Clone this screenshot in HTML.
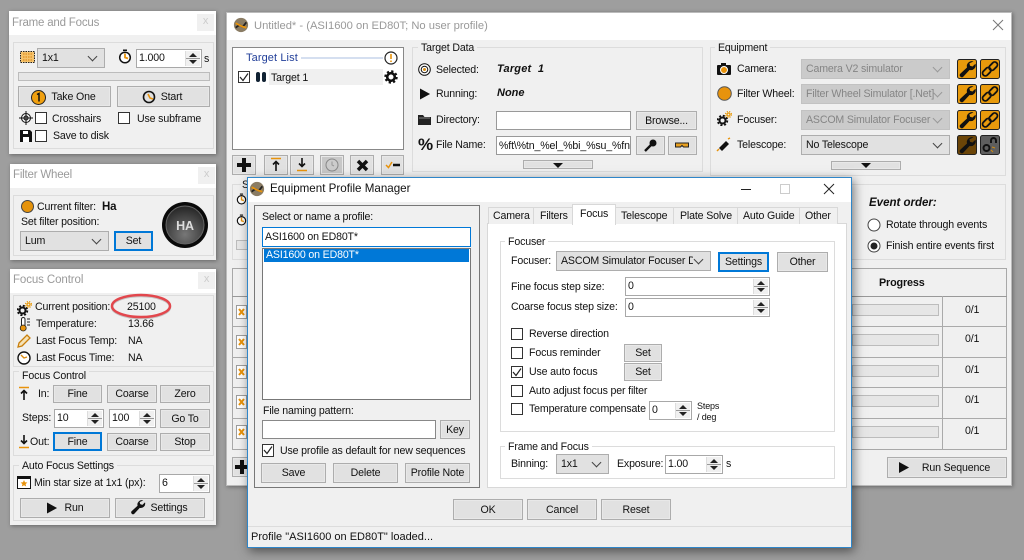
<!DOCTYPE html>
<html><head><meta charset="utf-8"><style>
html,body{margin:0;padding:0}
body{width:1024px;height:560px;overflow:hidden;position:relative;background:#9e9e9e;font:10.6px "Liberation Sans",sans-serif;letter-spacing:-.15px;color:#111}
.a,.t,.b,.c,.s,.k,.g,.x,.r{position:absolute;box-sizing:border-box}
.t{line-height:14px;margin-top:-6px;white-space:nowrap}
.g{border:1px solid #dcdcdc}
.b{background:#e1e1e1;border:1px solid #adadad;box-shadow:inset 0 0 0 1px #e8e8e8;display:flex;align-items:center;justify-content:center;white-space:nowrap}
.f{border:2px solid #0078d7;box-shadow:none}
.c{background:#e1e1e1;border:1px solid #adadad;line-height:19px;padding-left:4px;white-space:nowrap;overflow:hidden}
.c:after{content:"";position:absolute;right:8px;top:50%;width:6px;height:6px;margin-top:-5px;border-right:1px solid #444;border-bottom:1px solid #444;transform:rotate(45deg)}
.d{background:#cbcbcb;color:#858585;border-color:#c2c2c2}
.d:after{border-color:#999}
.s{background:#fff;border:1px solid #a8a8a8;line-height:17px;padding-left:2px;white-space:nowrap}
.s:after{content:"";position:absolute;right:1px;top:1px;bottom:1px;width:14px;background:linear-gradient(#f0f0f0 47%,#999 47%,#999 53%,#f0f0f0 53%);border-left:1px solid #ddd}
.s b{position:absolute;z-index:1;right:4px;width:0;height:0;border-left:4px solid transparent;border-right:4px solid transparent}
.s b.u{top:3px;border-bottom:4px solid #222}
.s b.n{bottom:3px;border-top:4px solid #222}
.k{width:12px;height:12px;background:#fff;border:1px solid #333}
.x{background:#f0f0f0;color:#ccc;width:17px;height:17px;text-align:center;line-height:15px;font-size:11px}
.p{background:#e6e6e6;border:1px solid #bcbcbc}
svg{position:absolute;overflow:visible}
.w{position:absolute;box-sizing:border-box;background:#f0f0f0;box-shadow:1px 1px 4px rgba(0,0,0,.35)}
.h{position:absolute;background:#fff;left:0;top:0;right:0}
.l{background:#f0f0f0;padding:0 3px}
</style></head><body>
<svg width="0" height="0" style="position:absolute"><defs>
<symbol id="wr" viewBox="0 0 20 20"><rect x=".5" y=".5" width="19" height="19" rx="2" fill="#e89a0c" stroke="#222"/><path d="M16.500 2.500a5 5 0 0 0-6.500 6L3 15a2.200 2.200 0 0 0 3 3l6.500-7a5 5 0 0 0 6-6.300l-3 2.800-2.500-.8-.6-2.400z" fill="#111"/></symbol>
<symbol id="wrd" viewBox="0 0 20 20"><rect x=".5" y=".5" width="19" height="19" rx="2" fill="#6b4508" stroke="#222"/><path d="M16.500 2.500a5 5 0 0 0-6.500 6L3 15a2.200 2.200 0 0 0 3 3l6.500-7a5 5 0 0 0 6-6.300l-3 2.800-2.500-.8-.6-2.400z" fill="#111"/></symbol>
<symbol id="ch" viewBox="0 0 20 20"><rect x=".5" y=".5" width="19" height="19" rx="2" fill="#e89a0c" stroke="#222"/><g fill="none" stroke="#111" stroke-width="1.800"><rect x="2" y="10" width="9.500" height="5.500" rx="2.700" transform="rotate(-45 6.700 12.700)"/><rect x="8.500" y="4.500" width="9.500" height="5.500" rx="2.700" transform="rotate(-45 13.200 7.200)"/></g></symbol>
<symbol id="gear" viewBox="0 0 14 14"><circle cx="7" cy="7" r="3.800" fill="none" stroke="#111" stroke-width="2.600"/><circle cx="7" cy="7" r="5.600" fill="none" stroke="#111" stroke-width="2.200" stroke-dasharray="2.200 2.200"/></symbol>
<symbol id="fg" viewBox="0 0 15 15"><circle cx="5.500" cy="9.500" r="3" fill="none" stroke="#111" stroke-width="2"/><circle cx="5.500" cy="9.500" r="4.800" fill="none" stroke="#111" stroke-width="1.800" stroke-dasharray="2 1.800"/><circle cx="11.500" cy="3.500" r="1.500" fill="none" stroke="#e89a0c" stroke-width="1.300"/><circle cx="11.500" cy="3.500" r="3" fill="none" stroke="#e89a0c" stroke-width="1.200" stroke-dasharray="1.200 1.200"/></symbol>
<symbol id="lg" viewBox="0 0 18 18"><circle cx="9" cy="9" r="8" fill="#8a7c64"/><path d="M3 12l4-3 4 2 4-5" fill="none" stroke="#222" stroke-width="2"/><path d="M3 7l4 2 4 2 4 1" fill="none" stroke="#e8930c" stroke-width="2"/></symbol>
<symbol id="ck" viewBox="0 0 12 12"><path d="M2 6l3 3.500L10 2.500" fill="none" stroke="#222" stroke-width="1.200"/></symbol>
<symbol id="clk" viewBox="0 0 14 14"><rect x="5" y="0" width="4" height="1.500" fill="#111"/><circle cx="7" cy="8" r="5.300" fill="#fff" stroke="#111" stroke-width="1.500"/><path d="M7 4v4l3 1" stroke="#e8930c" stroke-width="1.800" fill="none"/></symbol>
<symbol id="play" viewBox="0 0 12 12"><path d="M0 0L11 6L0 12z" fill="#111"/></symbol>
<symbol id="xo" viewBox="0 0 11 14"><rect x=".5" y=".5" width="10" height="13" fill="#fff" stroke="#444" stroke-dasharray="1 1"/><path d="M3 4l5 6M8 4l-5 6" stroke="#e8930c" stroke-width="2"/></symbol>
</defs></svg>

<!-- Frame and Focus -->
<div class="w" style="left:9px;top:11px;width:207px;height:143px"><div class="h" style="height:24px"></div></div>
<div class="t" style="left:12px;top:22px;color:#9a9a9a;font-size:11.500px;letter-spacing:-.2px">Frame and Focus</div>
<div class="x" style="left:197px;top:14px">x</div>
<div class="g" style="left:13px;top:42px;width:201px;height:107px"></div>
<svg style="left:20px;top:51px" width="15" height="12"><rect x=".5" y=".5" width="14" height="11" fill="#f5c26b" stroke="#222" stroke-dasharray="1.500 1"/><path d="M3 3h9M3 6h9M3 9h9" stroke="#d9820c" stroke-dasharray="1.500 1"/></svg>
<div class="c" style="left:37px;top:48px;width:68px;height:20px">1x1</div>
<svg style="left:118px;top:49px" width="14" height="15"><use href="#clk"/></svg>
<div class="s" style="left:136px;top:49px;width:66px;height:19px">1.000<b class="u"></b><b class="n"></b></div>
<div class="t" style="left:204px;top:58px">s</div>
<div class="p a" style="left:18px;top:72px;width:192px;height:9px"></div>
<div class="b" style="left:18px;top:86px;width:93px;height:21px;padding-left:18px">Take One</div>
<svg style="left:31px;top:90px" width="15" height="15"><circle cx="7.500" cy="7.500" r="7" fill="#f0a010" stroke="#222"/><path d="M6 4.500l2-1v8" stroke="#111" stroke-width="1.500" fill="none"/></svg>
<div class="b" style="left:117px;top:86px;width:93px;height:21px;padding-left:16px">Start</div>
<svg style="left:142px;top:90px" width="14" height="14"><circle cx="7" cy="7" r="5.500" fill="none" stroke="#111" stroke-width="1.600"/><path d="M6 4l2 4 3 1" stroke="#e8930c" stroke-width="1.600" fill="none"/></svg>
<svg style="left:19px;top:111px" width="14" height="14"><circle cx="7" cy="7" r="4.500" fill="none" stroke="#111"/><circle cx="7" cy="7" r="2" fill="none" stroke="#111"/><path d="M7 0v14M0 7h14" stroke="#111"/></svg>
<div class="k" style="left:35px;top:112px"></div><div class="t" style="left:52px;top:118px">Crosshairs</div>
<div class="k" style="left:118px;top:112px"></div><div class="t" style="left:137px;top:118px">Use subframe</div>
<svg style="left:20px;top:130px" width="12" height="12"><path d="M0 0h10l2 2v10H0z" fill="#111"/><rect x="3" y="1" width="5" height="3" fill="#fff"/><rect x="3" y="7" width="6" height="5" fill="#fff"/></svg>
<div class="k" style="left:35px;top:130px"></div><div class="t" style="left:53px;top:135px">Save to disk</div>

<!-- Filter Wheel -->
<div class="w" style="left:10px;top:164px;width:206px;height:96px"><div class="h" style="height:24px"></div></div>
<div class="t" style="left:13px;top:174px;color:#9a9a9a;font-size:11.500px;letter-spacing:-.2px">Filter Wheel</div>
<div class="x" style="left:198px;top:167px">x</div>
<div class="g" style="left:13px;top:195px;width:201px;height:61px"></div>
<svg style="left:21px;top:200px" width="13" height="13"><circle cx="6.500" cy="6.500" r="6" fill="#e5930c" stroke="#444"/></svg>
<div class="t" style="left:37px;top:206px">Current filter:</div>
<div class="t" style="left:102px;top:206px;font-weight:bold;font-size:11.500px">Ha</div>
<div class="t" style="left:21px;top:221px">Set filter position:</div>
<div class="c" style="left:20px;top:231px;width:89px;height:20px">Lum</div>
<div class="b f" style="left:114px;top:231px;width:39px;height:20px">Set</div>
<svg style="left:162px;top:202px" width="46" height="46"><defs><radialGradient id="kn" cx=".5" cy=".75" r=".7"><stop offset="0" stop-color="#777"/><stop offset="1" stop-color="#2a2a2a"/></radialGradient></defs><circle cx="23" cy="23" r="23" fill="#0a0a0a"/><circle cx="23" cy="23" r="19" fill="url(#kn)" stroke="#666"/><text x="23" y="28" text-anchor="middle" fill="#ddd" font-family="Liberation Sans" font-weight="bold" font-size="12.500">HA</text></svg>

<!-- Focus Control -->
<div class="w" style="left:10px;top:269px;width:206px;height:256px"><div class="h" style="height:24px"></div></div>
<div class="t" style="left:13px;top:279px;color:#9a9a9a;font-size:11.500px;letter-spacing:-.1px">Focus Control</div>
<div class="x" style="left:198px;top:272px">x</div>
<div class="g" style="left:13px;top:295px;width:201px;height:72px"></div>
<svg style="left:17px;top:301px" width="15" height="15"><use href="#fg"/></svg>
<div class="t" style="left:35px;top:306px">Current position:</div>
<div class="t" style="left:127px;top:306px">25100</div>
<div class="t" style="left:36px;top:323px">Temperature:</div>
<div class="t" style="left:128px;top:323px">13.66</div>
<svg style="left:19px;top:317px" width="12" height="15"><rect x="2.500" y=".5" width="3.500" height="9" rx="1.700" fill="#fff" stroke="#222"/><circle cx="4.200" cy="11" r="3" fill="#e8930c" stroke="#222" stroke-width=".8"/><path d="M8 2h3M8 5h3M8 8h3" stroke="#222"/></svg>
<div class="t" style="left:36px;top:340px">Last Focus Temp:</div>
<div class="t" style="left:128px;top:340px">NA</div>
<svg style="left:17px;top:334px" width="14" height="14"><path d="M1 13l1-4L10 1l3 3-8 8z" fill="#f4e2b8" stroke="#c97f0c" stroke-width="1.300"/></svg>
<div class="t" style="left:36px;top:357px">Last Focus Time:</div>
<div class="t" style="left:128px;top:357px">NA</div>
<svg style="left:17px;top:351px" width="14" height="14"><circle cx="7" cy="7" r="6" fill="#fff" stroke="#111" stroke-width="1.400"/><path d="M4 4l3 3 3-1" stroke="#d98a10" stroke-width="1.400" fill="none"/></svg>
<svg style="left:109px;top:292px;z-index:3" width="64" height="28"><ellipse cx="32" cy="15" rx="29" ry="11" fill="none" stroke="rgba(0,0,0,.18)" stroke-width="2.500"/><ellipse cx="32" cy="14" rx="29" ry="11" fill="none" stroke="#e2474d" stroke-width="2.500"/></svg>

<div class="g" style="left:13px;top:371px;width:201px;height:85px"></div>
<div class="t l" style="left:19px;top:375px">Focus Control</div>
<svg style="left:19px;top:387px" width="11" height="13"><path d="M0 .5h10" stroke="#e8930c" stroke-width="1.500"/><path d="M5 13V4M2 6.500l3-3 3 3" stroke="#111" stroke-width="1.600" fill="none"/></svg>
<div class="t" style="left:38px;top:393px">In:</div>
<div class="b" style="left:53px;top:385px;width:49px;height:18px">Fine</div>
<div class="b" style="left:107px;top:385px;width:50px;height:18px">Coarse</div>
<div class="b" style="left:160px;top:385px;width:50px;height:18px">Zero</div>
<div class="t" style="left:22px;top:417px">Steps:</div>
<div class="s" style="left:54px;top:409px;width:50px;height:19px">10<b class="u"></b><b class="n"></b></div>
<div class="s" style="left:109px;top:409px;width:47px;height:19px">100<b class="u"></b><b class="n"></b></div>
<div class="b" style="left:160px;top:409px;width:50px;height:19px">Go To</div>
<svg style="left:19px;top:435px" width="11" height="13"><path d="M5 0v8M2 5.500l3 3 3-3" stroke="#111" stroke-width="1.600" fill="none"/><path d="M0 12.500h10" stroke="#e8930c" stroke-width="1.500"/></svg>
<div class="t" style="left:30px;top:441px">Out:</div>
<div class="b f" style="left:53px;top:432px;width:49px;height:19px">Fine</div>
<div class="b" style="left:107px;top:433px;width:50px;height:18px">Coarse</div>
<div class="b" style="left:160px;top:433px;width:50px;height:18px">Stop</div>
<div class="g" style="left:13px;top:465px;width:201px;height:56px"></div>
<div class="t l" style="left:19px;top:465px">Auto Focus Settings</div>
<svg style="left:17px;top:476px" width="14" height="13"><rect x=".5" y=".5" width="13" height="12" fill="#fff" stroke="#111"/><rect x="0" y="0" width="14" height="3" fill="#111"/><path d="M7 4l1 2.300 2.400.2-1.800 1.600.6 2.400L7 9.200 4.800 10.500l.6-2.400L3.600 6.500 6 6.300z" fill="#e8930c"/></svg>
<div class="t" style="left:34px;top:482px">Min star size at 1x1 (px):</div>
<div class="s" style="left:159px;top:474px;width:51px;height:19px">6<b class="u"></b><b class="n"></b></div>
<div class="b" style="left:20px;top:498px;width:90px;height:20px;padding-left:18px">Run</div>
<svg style="left:47px;top:502px" width="11" height="12"><use href="#play"/></svg>
<div class="b" style="left:115px;top:498px;width:90px;height:20px;padding-left:18px">Settings</div>
<svg style="left:131px;top:500px" width="14" height="14" viewBox="3 2 15 16"><path d="M16.500 2.500a5 5 0 0 0-6.500 6L3 15a2.200 2.200 0 0 0 3 3l6.500-7a5 5 0 0 0 6-6.300l-3 2.800-2.500-.8-.6-2.400z" fill="#111"/></svg>

<!-- Main window -->
<div class="w" style="left:226px;top:12px;width:786px;height:474px;border:1px solid #bbb"><div class="h" style="height:27px"></div></div>
<svg style="left:233px;top:17px" width="16" height="16"><use href="#lg"/></svg>
<div class="t" style="left:254px;top:25px;color:#999;font-size:11.200px;letter-spacing:0">Untitled* - (ASI1600 on ED80T; No user profile)</div>
<svg style="left:993px;top:20px" width="10" height="10"><path d="M0 0l10 10M10 0L0 10" stroke="#777"/></svg>

<div class="a" style="left:232px;top:47px;width:172px;height:103px;background:#fff;border:1px solid #888"></div>
<div class="t" style="left:246px;top:57px;color:#23409a;font-size:11px;letter-spacing:.1px">Target List</div>
<div class="a" style="left:301px;top:57px;width:82px;height:2px;background:#d5dff0"></div>
<svg style="left:384px;top:51px" width="14" height="14"><circle cx="7" cy="7" r="6" fill="#fff" stroke="#222" stroke-width="1.200"/><path d="M7 3v5M7 9.500v1.500" stroke="#e8930c" stroke-width="1.600"/></svg>
<div class="k" style="left:238px;top:71px"></div><svg style="left:238px;top:71px" width="12" height="12"><use href="#ck"/></svg>
<div class="a" style="left:256px;top:72px;width:4px;height:10px;background:#123;border-radius:2px"></div><div class="a" style="left:262px;top:72px;width:4px;height:10px;background:#123;border-radius:2px"></div>
<div class="a" style="left:269px;top:69px;width:114px;height:16px;background:#f0f0f0"></div>
<div class="t" style="left:271px;top:77px">Target 1</div>
<svg style="left:384px;top:70px" width="14" height="14"><use href="#gear"/></svg>
<div class="b" style="left:232px;top:155px;width:24px;height:20px"></div>
<svg style="left:237px;top:158px" width="14" height="14"><path d="M7 0v14M0 7h14" stroke="#111" stroke-width="4"/></svg>
<div class="b" style="left:264px;top:155px;width:24px;height:20px"></div>
<svg style="left:271px;top:158px" width="11" height="13"><path d="M0 .5h10" stroke="#e8930c" stroke-width="1.500"/><path d="M5 13V4M2 6.500l3-3 3 3" stroke="#111" stroke-width="1.600" fill="none"/></svg>
<div class="b" style="left:290px;top:155px;width:24px;height:20px"></div>
<svg style="left:297px;top:158px" width="11" height="13"><path d="M5 0v8M2 5.500l3 3 3-3" stroke="#111" stroke-width="1.600" fill="none"/><path d="M0 12.500h10" stroke="#e8930c" stroke-width="1.500"/></svg>
<div class="b" style="left:320px;top:155px;width:24px;height:20px;background:#c8c8c8"></div>
<svg style="left:325px;top:158px" width="14" height="14"><circle cx="7" cy="7" r="6" fill="#ccc" stroke="#888"/><path d="M7 3.500V7l2 1" stroke="#999" fill="none"/></svg>
<div class="b" style="left:350px;top:155px;width:24px;height:20px"></div>
<svg style="left:357px;top:160px" width="11" height="11"><path d="M1 1l9 9M10 1l-9 9" stroke="#111" stroke-width="3.500"/></svg>
<div class="b" style="left:381px;top:155px;width:23px;height:20px"></div>
<svg style="left:385px;top:159px" width="16" height="12"><path d="M1 6l2.500 2.500L7 3" fill="none" stroke="#e8930c" stroke-width="1.500"/><path d="M8 6h7" stroke="#111" stroke-width="2.500"/></svg>

<div class="g" style="left:412px;top:47px;width:291px;height:125px"></div>
<div class="t l" style="left:418px;top:47px">Target Data</div>
<svg style="left:418px;top:63px" width="13" height="13"><circle cx="6.500" cy="6.500" r="5.800" fill="#fff" stroke="#111"/><circle cx="6.500" cy="6.500" r="3.300" fill="#fff" stroke="#111"/><circle cx="6.500" cy="6.500" r="1.500" fill="#d9901a"/></svg>
<div class="t" style="left:436px;top:69px">Selected:</div>
<div class="t" style="left:497px;top:69px;font:italic bold 11px 'Liberation Sans';letter-spacing:.2px">Target&nbsp; 1</div>
<svg style="left:420px;top:88px" width="11" height="12"><use href="#play"/></svg>
<div class="t" style="left:436px;top:93px">Running:</div>
<div class="t" style="left:497px;top:93px;font:italic bold 11px 'Liberation Sans';letter-spacing:0">None</div>
<svg style="left:418px;top:114px" width="13" height="11"><path d="M0 1h5l1.500 2H13v8H0z" fill="#222"/><path d="M1 4h11" stroke="#ccc" stroke-width=".6"/></svg>
<div class="t" style="left:436px;top:119px">Directory:</div>
<div class="a" style="left:496px;top:111px;width:135px;height:19px;background:#fff;border:1px solid #999"></div>
<div class="b" style="left:636px;top:111px;width:61px;height:19px">Browse...</div>
<div class="t" style="left:418px;top:144px;font-size:17px;font-weight:bold;color:#111">%</div>
<div class="t" style="left:436px;top:144px">File Name:</div>
<div class="a" style="left:496px;top:136px;width:135px;height:19px;background:#fff;border:1px solid #999;line-height:18px;padding-left:2px;white-space:nowrap;overflow:hidden">%ft\%tn_%el_%bi_%su_%fn</div>
<div class="b" style="left:636px;top:136px;width:29px;height:19px"></div>
<svg style="left:643px;top:139px" width="14" height="13"><circle cx="10" cy="4" r="3.500" fill="#111"/><path d="M8 6L2 12" stroke="#111" stroke-width="2.400"/></svg>
<div class="b" style="left:668px;top:136px;width:29px;height:19px"></div>
<svg style="left:675px;top:142px" width="14" height="7"><path d="M.5 1h13v4h-5L7 3.500 5.500 5h-5z" fill="#e8a020" stroke="#222"/></svg>
<div class="b" style="left:523px;top:160px;width:70px;height:9px"></div>
<div class="a" style="left:553px;top:163px;border-left:5px solid transparent;border-right:5px solid transparent;border-top:5px solid #111"></div>

<div class="g" style="left:710px;top:47px;width:296px;height:129px"></div>
<div class="t l" style="left:715px;top:47px">Equipment</div>
<svg style="left:717px;top:63px" width="14" height="12"><rect x="0" y="2" width="14" height="10" rx="1" fill="#111"/><rect x="4" y="0" width="5" height="3" fill="#111"/><circle cx="7" cy="7" r="3.500" fill="#e8930c" stroke="#fff"/></svg>
<div class="t" style="left:737px;top:68px">Camera:</div>
<div class="c d" style="left:801px;top:59px;width:149px;height:20px">Camera V2 simulator</div>
<svg style="left:717px;top:86px" width="15" height="15"><circle cx="7.500" cy="7.500" r="6.800" fill="#e8930c" stroke="#555"/></svg>
<div class="t" style="left:737px;top:93px">Filter Wheel:</div>
<div class="c d" style="left:801px;top:84px;width:149px;height:20px">Filter Wheel Simulator [.Net]</div>
<svg style="left:717px;top:111px" width="15" height="15"><use href="#fg"/></svg>
<div class="t" style="left:737px;top:119px">Focuser:</div>
<div class="c d" style="left:801px;top:110px;width:149px;height:20px"><span style="display:block;width:126px;overflow:hidden">ASCOM Simulator Focuser D</span></div>
<svg style="left:717px;top:138px" width="14" height="14"><path d="M2 10l7-7 3 3-7 7z" fill="#111"/><path d="M0 13l2-2M11 1l2-1" stroke="#e8930c" stroke-width="1.500"/></svg>
<div class="t" style="left:737px;top:144px">Telescope:</div>
<div class="c" style="left:801px;top:135px;width:149px;height:20px">No Telescope</div>
<svg style="left:957px;top:59px" width="20" height="20"><use href="#wr"/></svg><svg style="left:980px;top:59px" width="20" height="20"><use href="#ch"/></svg>
<svg style="left:957px;top:84px" width="20" height="20"><use href="#wr"/></svg><svg style="left:980px;top:84px" width="20" height="20"><use href="#ch"/></svg>
<svg style="left:957px;top:110px" width="20" height="20"><use href="#wr"/></svg><svg style="left:980px;top:110px" width="20" height="20"><use href="#ch"/></svg>
<svg style="left:957px;top:135px" width="20" height="20"><use href="#wrd"/></svg>
<svg style="left:980px;top:135px" width="20" height="20"><rect x=".5" y=".5" width="19" height="19" rx="2" fill="#5e5e5e" stroke="#222"/><path d="M11 8V5.500a2.500 2.500 0 0 1 5 0V8" fill="none" stroke="#111" stroke-width="2"/><circle cx="6.500" cy="13" r="3" fill="none" stroke="#111" stroke-width="2"/><path d="M12 12l3 1M11 15l2 2" stroke="#d08a10"/></svg>
<div class="b" style="left:831px;top:161px;width:70px;height:9px"></div>
<div class="a" style="left:861px;top:163px;border-left:5px solid transparent;border-right:5px solid transparent;border-top:5px solid #111"></div>

<div class="g" style="left:232px;top:184px;width:774px;height:76px"></div>
<div class="t" style="left:869px;top:203px;font:italic bold 11.500px 'Liberation Sans';letter-spacing:0">Event order:</div>
<svg style="left:867px;top:218px" width="14" height="14"><circle cx="7" cy="7" r="6" fill="#fff" stroke="#444"/></svg>
<div class="t" style="left:886px;top:224px">Rotate through events</div>
<svg style="left:867px;top:239px" width="14" height="14"><circle cx="7" cy="7" r="6" fill="#fff" stroke="#444"/><circle cx="7" cy="7" r="3.500" fill="#222"/></svg>
<div class="t" style="left:886px;top:245px">Finish entire events first</div>
<div class="t" style="left:241px;top:184px;background:#f0f0f0;padding:0 1px">S</div>
<svg style="left:236px;top:192px" width="11" height="14"><use href="#clk"/></svg>
<svg style="left:236px;top:213px" width="11" height="14"><use href="#clk"/></svg>
<div class="p a" style="left:236px;top:240px;width:12px;height:10px"></div>

<!-- table -->
<div class="a" style="left:232px;top:268px;width:775px;height:182px;border:1px solid #a8a8a8;background:#f0f0f0"></div>
<div class="a" style="left:232px;top:296px;width:775px;height:1px;background:#999"></div>
<div class="a" style="left:232px;top:326px;width:775px;height:1px;background:#aaa"></div>
<div class="a" style="left:232px;top:357px;width:775px;height:1px;background:#aaa"></div>
<div class="a" style="left:232px;top:387px;width:775px;height:1px;background:#aaa"></div>
<div class="a" style="left:232px;top:418px;width:775px;height:1px;background:#aaa"></div>
<div class="a" style="left:942px;top:296px;width:1px;height:154px;background:#aaa"></div>
<div class="t" style="left:879px;top:282px;font-weight:bold;font-size:10.800px">Progress</div>
<div class="p a" style="left:852px;top:304px;width:87px;height:12px"></div><div class="t" style="left:965px;top:309px">0/1</div>
<div class="p a" style="left:852px;top:334px;width:87px;height:12px"></div><div class="t" style="left:965px;top:338px">0/1</div>
<div class="p a" style="left:852px;top:365px;width:87px;height:12px"></div><div class="t" style="left:965px;top:369px">0/1</div>
<div class="p a" style="left:852px;top:395px;width:87px;height:12px"></div><div class="t" style="left:965px;top:399px">0/1</div>
<div class="p a" style="left:852px;top:426px;width:87px;height:12px"></div><div class="t" style="left:965px;top:430px">0/1</div>
<svg style="left:236px;top:305px" width="11" height="14"><use href="#xo"/></svg>
<svg style="left:236px;top:335px" width="11" height="14"><use href="#xo"/></svg>
<svg style="left:236px;top:365px" width="11" height="14"><use href="#xo"/></svg>
<svg style="left:236px;top:395px" width="11" height="14"><use href="#xo"/></svg>
<svg style="left:236px;top:425px" width="11" height="14"><use href="#xo"/></svg>
<div class="b" style="left:232px;top:457px;width:24px;height:20px"></div>
<svg style="left:235px;top:460px" width="14" height="14"><path d="M7 0v14M0 7h14" stroke="#111" stroke-width="4"/></svg>
<div class="b" style="left:887px;top:457px;width:120px;height:21px;padding-left:18px">Run Sequence</div>
<svg style="left:899px;top:461px" width="11" height="13"><use href="#play"/></svg>

<!-- Dialog -->
<div class="w" style="left:247px;top:177px;width:605px;height:371px;border:1px solid #2f86c9;box-shadow:2px 3px 10px rgba(0,0,0,.5)"><div class="h" style="height:24px"></div></div>
<svg style="left:249px;top:181px" width="16" height="16"><use href="#lg"/></svg>
<div class="t" style="left:270px;top:188px;font-size:11.600px;letter-spacing:0">Equipment Profile Manager</div>
<div class="a" style="left:741px;top:189px;width:10px;height:1px;background:#222"></div>
<div class="a" style="left:780px;top:184px;width:10px;height:10px;border:1px solid #ccc"></div>
<svg style="left:824px;top:184px" width="10" height="10"><path d="M0 0l10 10M10 0L0 10" stroke="#222"/></svg>

<div class="a" style="left:254px;top:205px;width:226px;height:283px;border:1px solid #777"></div>
<div class="t" style="left:262px;top:216px">Select or name a profile:</div>
<div class="a" style="left:262px;top:227px;width:209px;height:20px;background:#fff;border:1px solid #0078d7;line-height:18px;padding-left:2px">ASI1600 on ED80T*</div>
<div class="a" style="left:262px;top:248px;width:209px;height:152px;background:#fff;border:1px solid #777"></div>
<div class="a" style="left:264px;top:249px;width:205px;height:13px;background:#0078d7;color:#fff;line-height:13px;padding-left:2px">ASI1600 on ED80T*</div>
<div class="t" style="left:263px;top:410px">File naming pattern:</div>
<div class="a" style="left:262px;top:420px;width:174px;height:19px;background:#fff;border:1px solid #888"></div>
<div class="b" style="left:440px;top:420px;width:30px;height:19px">Key</div>
<div class="k" style="left:262px;top:444px;height:13px"></div><svg style="left:262px;top:444px" width="12" height="12"><use href="#ck"/></svg>
<div class="t" style="left:280px;top:450px">Use profile as default for new sequences</div>
<div class="b" style="left:261px;top:463px;width:65px;height:20px">Save</div>
<div class="b" style="left:333px;top:463px;width:65px;height:20px">Delete</div>
<div class="b" style="left:405px;top:463px;width:65px;height:20px">Profile Note</div>

<div class="a" style="left:487px;top:223px;width:360px;height:265px;background:#fff;border:1px solid #d8d8d8"></div>
<div class="a" style="left:488px;top:207px;width:350px;height:17px;background:#f0f0f0;border:1px solid #d8d8d8;border-bottom:0"></div>
<div class="a" style="left:533px;top:207px;width:1px;height:17px;background:#d8d8d8"></div>
<div class="a" style="left:673px;top:207px;width:1px;height:17px;background:#d8d8d8"></div>
<div class="a" style="left:737px;top:207px;width:1px;height:17px;background:#d8d8d8"></div>
<div class="a" style="left:799px;top:207px;width:1px;height:17px;background:#d8d8d8"></div>
<div class="a" style="left:572px;top:204px;width:44px;height:21px;background:#fff;border:1px solid #d8d8d8;border-bottom:0"></div>
<div class="t" style="left:493px;top:215px">Camera</div>
<div class="t" style="left:540px;top:215px">Filters</div>
<div class="t" style="left:580px;top:213px">Focus</div>
<div class="t" style="left:621px;top:215px">Telescope</div>
<div class="t" style="left:680px;top:215px">Plate Solve</div>
<div class="t" style="left:743px;top:215px">Auto Guide</div>
<div class="t" style="left:805px;top:215px">Other</div>

<div class="g" style="left:500px;top:241px;width:335px;height:191px"></div>
<div class="t" style="left:505px;top:241px;background:#fff;padding:0 3px">Focuser</div>
<div class="t" style="left:511px;top:260px">Focuser:</div>
<div class="c" style="left:556px;top:251px;width:155px;height:20px;color:#111"><span style="display:block;width:132px;overflow:hidden">ASCOM Simulator Focuser Dr</span></div>
<div class="b f" style="left:718px;top:252px;width:51px;height:20px">Settings</div>
<div class="b" style="left:777px;top:252px;width:51px;height:20px">Other</div>
<div class="t" style="left:511px;top:286px">Fine focus step size:</div>
<div class="s" style="left:625px;top:277px;width:145px;height:19px">0<b class="u"></b><b class="n"></b></div>
<div class="t" style="left:511px;top:306px">Coarse focus step size:</div>
<div class="s" style="left:625px;top:298px;width:145px;height:19px">0<b class="u"></b><b class="n"></b></div>
<div class="k" style="left:511px;top:328px"></div><div class="t" style="left:529px;top:333px">Reverse direction</div>
<div class="k" style="left:511px;top:347px"></div><div class="t" style="left:529px;top:352px">Focus reminder</div>
<div class="b" style="left:624px;top:344px;width:38px;height:18px">Set</div>
<div class="k" style="left:511px;top:366px"></div><svg style="left:511px;top:366px" width="12" height="12"><use href="#ck"/></svg><div class="t" style="left:529px;top:371px">Use auto focus</div>
<div class="b" style="left:624px;top:363px;width:38px;height:18px">Set</div>
<div class="k" style="left:511px;top:385px"></div><div class="t" style="left:529px;top:390px">Auto adjust focus per filter</div>
<div class="k" style="left:511px;top:403px"></div><div class="t" style="left:529px;top:408px">Temperature compensate</div>
<div class="s" style="left:649px;top:401px;width:43px;height:19px">0<b class="u"></b><b class="n"></b></div>
<div class="t" style="left:697px;top:405px;font-size:9px">Steps</div>
<div class="t" style="left:697px;top:416px;font-size:9px">/ deg</div>

<div class="g" style="left:500px;top:446px;width:335px;height:33px"></div>
<div class="t" style="left:505px;top:446px;background:#fff;padding:0 3px">Frame and Focus</div>
<div class="t" style="left:511px;top:463px">Binning:</div>
<div class="c" style="left:556px;top:454px;width:53px;height:20px">1x1</div>
<div class="t" style="left:617px;top:463px">Exposure:</div>
<div class="s" style="left:665px;top:455px;width:58px;height:19px">1.00<b class="u"></b><b class="n"></b></div>
<div class="t" style="left:726px;top:463px">s</div>

<div class="b" style="left:453px;top:499px;width:70px;height:21px">OK</div>
<div class="b" style="left:527px;top:499px;width:70px;height:21px">Cancel</div>
<div class="b" style="left:601px;top:499px;width:70px;height:21px">Reset</div>
<div class="a" style="left:248px;top:526px;width:603px;height:1px;background:#dcdcdc"></div>
<div class="t" style="left:251px;top:536px;font-size:11px;letter-spacing:0">Profile "ASI1600 on ED80T" loaded...</div>
</body></html>
